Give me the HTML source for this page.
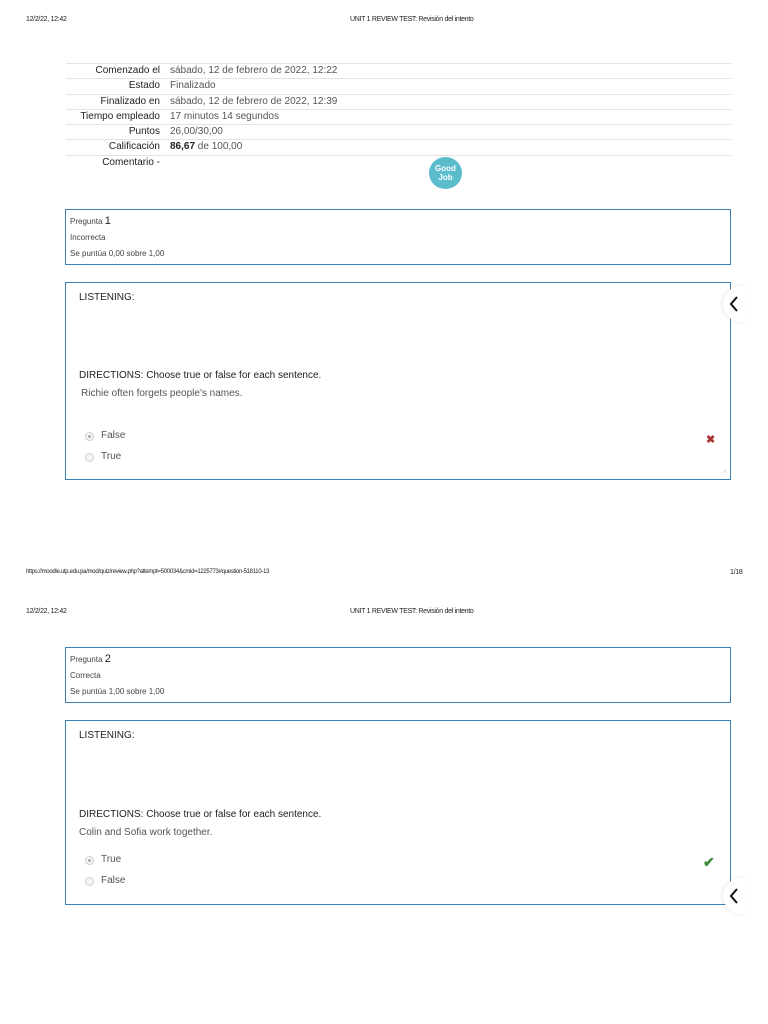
<!DOCTYPE html>
<html><head><meta charset="utf-8"><style>
*{margin:0;padding:0;box-sizing:border-box}
body{width:768px;height:1024px;background:#fff;font-family:"Liberation Sans",sans-serif;color:#333;position:relative;overflow:hidden}
.a{position:absolute}
.hdr{font-size:7px;color:#222;letter-spacing:-0.3px}
.row{position:absolute;left:66px;width:665px;height:15.3px;border-top:1px solid #e4e4e4;font-size:10px;line-height:14px}
.row .k{position:absolute;right:571px;color:#222;white-space:nowrap}
.row .v{position:absolute;left:104px;color:#555;white-space:nowrap}
.box{position:absolute;left:65px;width:666px;border:1px solid #3b7fb3}
.info{font-size:8px;color:#444}
.q{font-size:10px}
.radio{position:absolute;width:9px;height:9px;border:1px solid #ccc;border-radius:50%;background:#f5f5f5}
.radio.on::after{content:"";position:absolute;left:2px;top:2px;width:3px;height:3px;border-radius:50%;background:#aaa}
.lbl{position:absolute;font-size:10px;color:#555}
.arrow{position:absolute;width:22px;height:36px;background:#fff;border-radius:18px 0 0 18px;box-shadow:-1px 0 3px rgba(0,0,0,.1)}
</style></head><body>
<div class="a hdr" style="left:26px;top:16px">12/2/22, 12:42</div>
<div class="a hdr" style="left:350px;top:16px">UNIT 1 REVIEW TEST: Revisión del intento</div>

<div class="row" style="top:63px"><span class="k">Comenzado el</span><span class="v">sábado, 12 de febrero de 2022, 12:22</span></div>
<div class="row" style="top:78px"><span class="k">Estado</span><span class="v">Finalizado</span></div>
<div class="row" style="top:94px"><span class="k">Finalizado en</span><span class="v">sábado, 12 de febrero de 2022, 12:39</span></div>
<div class="row" style="top:109px"><span class="k">Tiempo empleado</span><span class="v">17 minutos 14 segundos</span></div>
<div class="row" style="top:124px"><span class="k">Puntos</span><span class="v">26,00/30,00</span></div>
<div class="row" style="top:139px"><span class="k">Calificación</span><span class="v"><b style="color:#222">86,67</b> de 100,00</span></div>
<div class="row" style="top:155px"><span class="k">Comentario -</span></div>
<div class="a" style="left:429px;top:157px;width:33px;height:32px;border-radius:50%;background:#5bbccc;color:#fff;font-size:8px;font-weight:bold;text-align:center;line-height:9px;padding-top:7px">Good<br>Job</div>

<div class="box" style="top:209px;height:56px">
 <div class="a info" style="left:4px;top:5px">Pregunta <span style="font-size:11px;color:#222">1</span></div>
 <div class="a info" style="left:4px;top:23px">Incorrecta</div>
 <div class="a info" style="left:4px;top:39px">Se puntúa 0,00 sobre 1,00</div>
</div>
<div class="box" style="top:282px;height:198px">
 <div class="a q" style="left:13px;top:9px;color:#222">LISTENING:</div>
 <div class="a q" style="left:13px;top:87px;color:#222">DIRECTIONS: Choose true or false for each sentence.</div>
 <div class="a q" style="left:15px;top:105px;color:#555">Richie often forgets people's names.</div>
 <div class="radio on" style="left:19px;top:149px"></div><div class="lbl" style="left:35px;top:147px">False</div>
 <div class="radio" style="left:19px;top:170px"></div><div class="lbl" style="left:35px;top:168px">True</div>
 <div class="a" style="left:640px;top:150px;color:#a33;font-size:11px;font-weight:bold">✖</div>
</div>
<div class="a" style="left:723px;top:469px;font-size:8px;color:#ccc">^</div>
<div class="arrow" style="left:723px;top:286px"><svg width="22" height="36"><path d="M14 11 L8 18 L14 25" stroke="#111" stroke-width="2" fill="none"/></svg></div>

<div class="a" style="left:26px;top:569px;font-size:6px;color:#222;letter-spacing:-0.3px">https://moodle.utp.edu.pa/mod/quiz/review.php?attempt=500034&amp;cmid=1225773#question-518110-13</div>
<div class="a hdr" style="left:730px;top:569px">1/18</div>

<div class="a hdr" style="left:26px;top:608px">12/2/22, 12:42</div>
<div class="a hdr" style="left:350px;top:608px">UNIT 1 REVIEW TEST: Revisión del intento</div>

<div class="box" style="top:647px;height:56px">
 <div class="a info" style="left:4px;top:5px">Pregunta <span style="font-size:11px;color:#222">2</span></div>
 <div class="a info" style="left:4px;top:23px">Correcta</div>
 <div class="a info" style="left:4px;top:39px">Se puntúa 1,00 sobre 1,00</div>
</div>
<div class="box" style="top:720px;height:185px">
 <div class="a q" style="left:13px;top:9px;color:#222">LISTENING:</div>
 <div class="a q" style="left:13px;top:88px;color:#222">DIRECTIONS: Choose true or false for each sentence.</div>
 <div class="a q" style="left:13px;top:106px;color:#555">Colin and Sofia work together.</div>
 <div class="radio on" style="left:19px;top:135px"></div><div class="lbl" style="left:35px;top:133px">True</div>
 <div class="radio" style="left:19px;top:156px"></div><div class="lbl" style="left:35px;top:154px">False</div>
 <div class="a" style="left:637px;top:133px;color:#3a8a3a;font-size:14px;font-weight:bold">✔</div>
</div>
<div class="arrow" style="left:723px;top:878px"><svg width="22" height="36"><path d="M14 11 L8 18 L14 25" stroke="#111" stroke-width="2" fill="none"/></svg></div>
</body></html>
